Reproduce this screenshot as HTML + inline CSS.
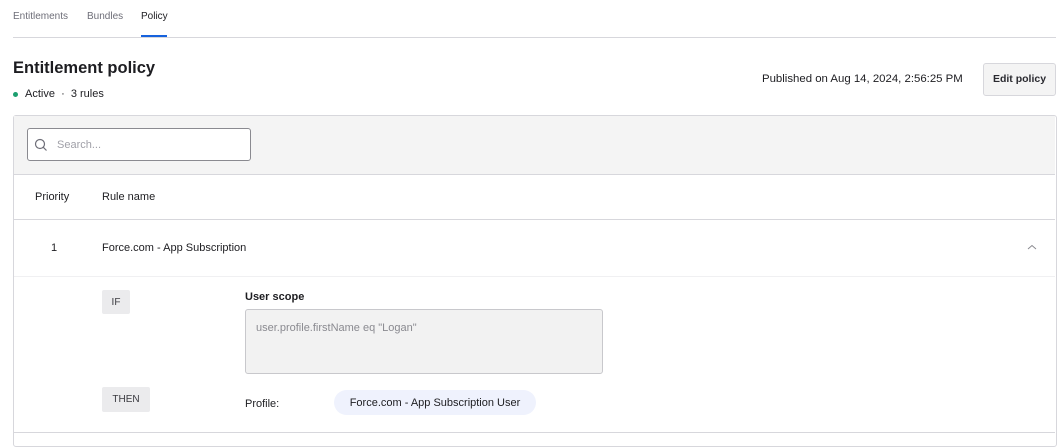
<!DOCTYPE html><html><head><style>
body{margin:0;width:1062px;height:438px;background:#fff;font-family:"Liberation Sans",sans-serif;color:#1d1d21;position:relative;overflow:hidden}
.a{position:absolute}
</style></head><body>
<div class="a" style="left:13px;top:11px;font-size:10px;color:#6e6e78">Entitlements</div>
<div class="a" style="left:87px;top:11px;font-size:10px;color:#6e6e78">Bundles</div>
<div class="a" style="left:141px;top:11px;font-size:10px;color:#1d1d21">Policy</div>
<div class="a" style="left:13px;top:37px;width:1043px;height:1px;background:#d7d7dc"></div>
<div class="a" style="left:141px;top:35px;width:26px;height:2px;background:#1662dd"></div>
<div class="a" style="left:13px;top:59px;font-size:16.5px;font-weight:bold;color:#1d1d21">Entitlement policy</div>
<div class="a" style="left:13px;top:92px;width:5px;height:5px;border-radius:50%;background:#1c9f6f"></div>
<div class="a" style="left:25px;top:88px;font-size:11px">Active &nbsp;·&nbsp; 3 rules</div>
<div class="a" style="left:762px;top:73px;font-size:11.4px">Published on Aug 14, 2024, 2:56:25 PM</div>
<div class="a" style="left:983px;top:63px;width:71px;height:31px;border:1px solid #d7d7dc;border-radius:3px;background:#f4f4f4;font-size:10.5px;font-weight:bold;line-height:31px;text-align:center;color:#2a2a30">Edit policy</div>
<div class="a" style="left:13px;top:115px;width:1042px;height:330px;border:1px solid #d7d7dc;border-radius:3px"></div>
<div class="a" style="left:14px;top:116px;width:1041px;height:58px;background:#f4f4f4;border-bottom:1px solid #d7d7dc"></div>
<div class="a" style="left:27px;top:128px;width:222px;height:31px;border:1px solid #8a8a90;border-radius:3px;background:#fff"></div>
<svg class="a" style="left:34px;top:138px" width="14" height="14" viewBox="0 0 14 14"><circle cx="6" cy="6" r="4.5" fill="none" stroke="#6e6e78" stroke-width="1.2"/><path d="M9.3 9.3L12.5 12.5" stroke="#6e6e78" stroke-width="1.2"/></svg>
<div class="a" style="left:57px;top:139px;font-size:11px;color:#a0a0a8">Search...</div>
<div class="a" style="left:35px;top:191px;font-size:11px">Priority</div>
<div class="a" style="left:102px;top:191px;font-size:11px">Rule name</div>
<div class="a" style="left:14px;top:219px;width:1041px;height:1px;background:#d7d7dc"></div>
<div class="a" style="left:51px;top:242px;font-size:11px">1</div>
<div class="a" style="left:102px;top:242px;font-size:11px">Force.com - App Subscription</div>
<svg class="a" style="left:1027px;top:244px" width="10" height="6" viewBox="0 0 10 6"><path d="M1 5L5 1.5L9 5" fill="none" stroke="#8a8a90" stroke-width="1"/></svg>
<div class="a" style="left:14px;top:276px;width:1041px;height:1px;background:#f0f0f2"></div>
<div class="a" style="left:102px;top:290px;width:28px;height:24px;background:#ebebed;border-radius:2px;font-size:10px;line-height:25px;text-align:center;color:#3a3a40">IF</div>
<div class="a" style="left:245px;top:291px;font-size:11px;font-weight:bold">User scope</div>
<div class="a" style="left:245px;top:309px;width:356px;height:63px;background:#f2f2f2;border:1px solid #c8c8cc;border-radius:3px"></div>
<div class="a" style="left:256px;top:322px;font-size:11px;color:#8a8a90">user.profile.firstName eq "Logan"</div>
<div class="a" style="left:102px;top:387px;width:48px;height:25px;background:#ebebed;border-radius:2px;font-size:10px;line-height:25px;text-align:center;color:#3a3a40">THEN</div>
<div class="a" style="left:245px;top:398px;font-size:11px">Profile:</div>
<div class="a" style="left:334px;top:390px;width:202px;height:25px;background:#eff2fd;border-radius:13px;font-size:11px;line-height:27px;text-align:center">Force.com - App Subscription User</div>
<div class="a" style="left:14px;top:432px;width:1041px;height:1px;background:#d7d7dc"></div>
</body></html>
